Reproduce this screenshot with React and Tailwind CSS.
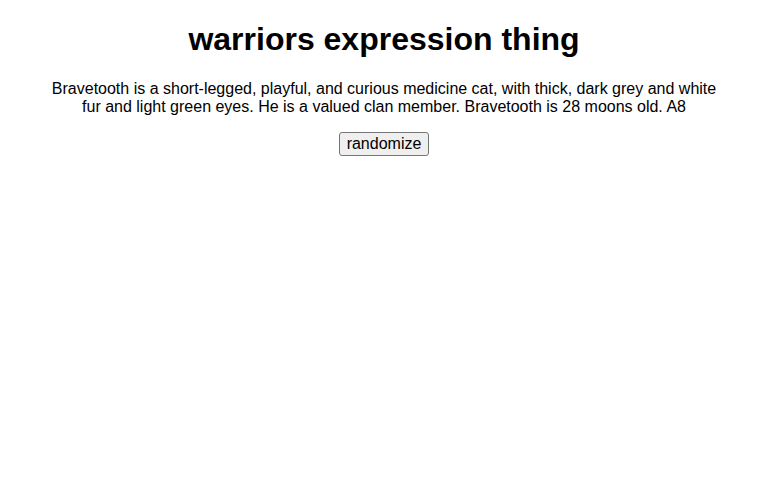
export default function App() {
  return (
    <div className="min-h-[480px] bg-white px-2 pt-[21.44px] text-center font-['Liberation_Sans',Arial,sans-serif] text-black">
      <h1 className="text-[32px] font-bold leading-[normal]">warriors expression thing</h1>
      <p className="mx-auto mt-[21.44px] max-w-[676px] text-[16px] leading-[normal]">
        Bravetooth is a short-legged, playful, and curious medicine cat, with thick, dark grey and white fur and light green eyes. He is a valued clan member. Bravetooth is 28 moons old. A8
      </p>
      <button
        type="button"
        className="mt-4 rounded-[3px] border border-[#767676] bg-[#efefef] px-[7px] py-[2px] text-[16px] leading-[normal] text-black"
      >
        randomize
      </button>
    </div>
  );
}
